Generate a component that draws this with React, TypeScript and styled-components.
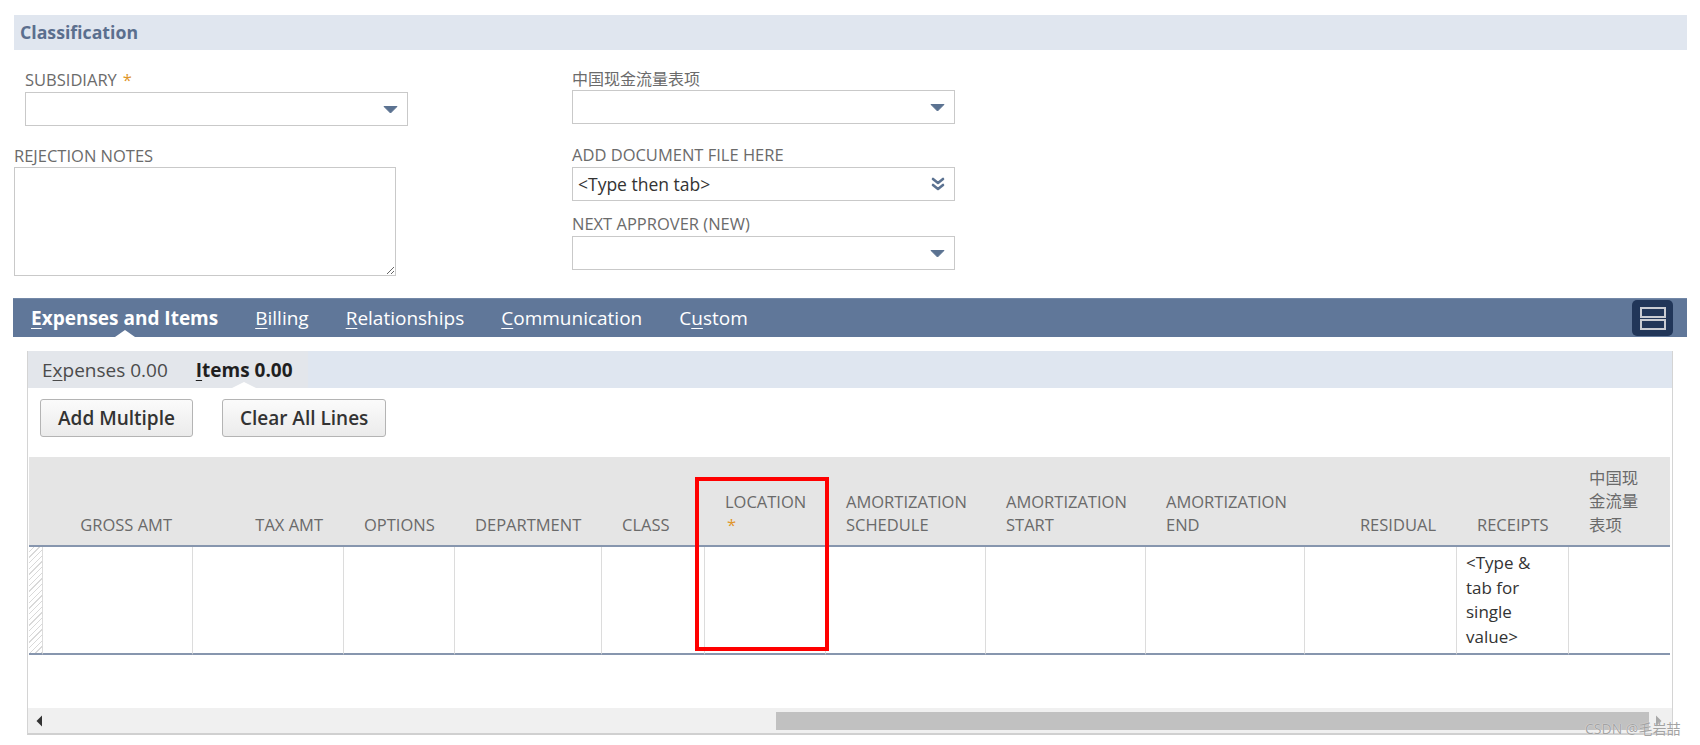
import React from 'react';
import styled, { createGlobalStyle, css } from 'styled-components';

const GlobalStyle = createGlobalStyle`
  html, body {
    margin: 0;
    padding: 0;
    background: #ffffff;
  }
  body {
    font-family: 'Open Sans', 'Noto Sans CJK SC', sans-serif;
    color: #333333;
  }
  * {
    box-sizing: border-box;
  }
`;

const Page = styled.div`
  position: relative;
  width: 1700px;
  height: 745px;
  padding: 15px 13px 0 13px;
  overflow: hidden;
`;

const SectionBar = styled.div`
  height: 35px;
  margin-left: 1px;
  padding-left: 6px;
  background: #e0e6ef;
  color: #5b6f8e;
  font-size: 17.7px;
  font-weight: 700;
  line-height: 35px;
`;

const FormGrid = styled.div`
  display: grid;
  grid-template-columns: 396px 383px;
  column-gap: 163px;
  align-items: start;
`;

const Column = styled.div<{ $top: number }>`
  padding-top: ${p => p.$top}px;
`;

const Field = styled.div<{ $indent?: number; $gap?: number }>`
  margin-left: ${p => p.$indent ?? 0}px;
  margin-top: ${p => p.$gap ?? 0}px;
`;

const FieldLabel = styled.div<{ $gap?: number }>`
  margin-bottom: ${p => p.$gap ?? 1}px;
  font-size: 16.5px;
  line-height: 20px;
  color: #6b6b6b;
  text-transform: uppercase;
  white-space: nowrap;
`;

const Cjk = styled.span<{ $size?: number }>`
  font-family: 'Noto Sans CJK SC', sans-serif;
  font-size: ${p => p.$size ?? 16}px;
`;

const Required = styled.span<{ $block?: boolean }>`
  color: #e0962b;
  margin-left: 6px;
  ${p =>
    p.$block &&
    css`
      display: block;
      margin-left: 2px;
    `}
`;

const SelectBox = styled.div<{ $width: number; $height?: number }>`
  width: ${p => p.$width}px;
  height: ${p => p.$height ?? 34}px;
  border: 1px solid #c9c9c9;
  background: #ffffff;
  display: flex;
  align-items: center;
  justify-content: space-between;
  padding: 0 9px 0 5px;
  font-size: 17.5px;
  color: #333333;
`;

const NotesArea = styled.textarea`
  display: block;
  width: 382px;
  height: 109px;
  margin: 0;
  border: 1px solid #c9c9c9;
  resize: both;
  font-family: inherit;
  font-size: 17px;
  outline: none;
`;

const TabBar = styled.div`
  margin-top: 22px;
  height: 39px;
  background: #607799;
  border-top: 1px solid #7388a7;
  display: flex;
  align-items: stretch;
  gap: 37px;
  padding: 0 14px 0 18px;
`;

const notch = (half: number, tall: number) => css`
  &::after {
    content: '';
    position: absolute;
    left: 50%;
    bottom: 0;
    margin-left: -${half}px;
    border-left: ${half}px solid transparent;
    border-right: ${half}px solid transparent;
    border-bottom: ${tall}px solid #ffffff;
  }
`;

const Tab = styled.div<{ $active?: boolean }>`
  position: relative;
  display: flex;
  align-items: center;
  font-size: 19px;
  color: #ffffff;
  font-weight: ${p => (p.$active ? 700 : 400)};
  white-space: nowrap;
  ${p => p.$active && notch(10, 7)}
`;

const Key = styled.u`
  text-decoration-thickness: 1px;
  text-underline-offset: 3px;
`;

const MenuButton = styled.div`
  margin-left: auto;
  align-self: center;
  width: 41px;
  height: 36px;
  border-radius: 5px;
  background: #213659;
  display: flex;
  align-items: center;
  justify-content: center;
`;

const Panel = styled.div`
  margin: 14px 14px 0 14px;
  border: 1px solid #d4d4d4;
  border-top: 0;
  border-bottom: 2px solid #d0d0d0;
`;

const SubtabBand = styled.div`
  height: 37px;
  background: #dfe6f0;
  display: flex;
`;

const SubtabGroup = styled.div`
  display: flex;
  align-items: stretch;
  gap: 28px;
  padding: 0 15px 0 14px;
  background: #e3e6eb;
`;

const Subtab = styled.div<{ $active?: boolean }>`
  position: relative;
  display: flex;
  align-items: center;
  font-size: 19px;
  color: ${p => (p.$active ? '#1f1f1f' : '#4b4b4b')};
  font-weight: ${p => (p.$active ? 700 : 400)};
  white-space: nowrap;
  ${p => p.$active && notch(12, 6)}
`;

const ButtonRow = styled.div`
  display: flex;
  gap: 29px;
  padding: 11px 0 0 12px;
`;

const ActionButton = styled.button`
  height: 38px;
  padding: 0 17px;
  border: 1px solid #b4b4b4;
  border-radius: 3px;
  background: linear-gradient(#fbfbfb, #ebebeb);
  font-family: inherit;
  font-size: 19px;
  font-weight: 600;
  color: #333333;
`;

const GridWrap = styled.div`
  margin: 20px 0 0 1px;
  width: 1641px;
  overflow: hidden;
`;

const LineTable = styled.table`
  width: 1641px;
  table-layout: fixed;
  border-collapse: separate;
  border-spacing: 0;
`;

const HeadCell = styled.th<{ $align?: 'left' | 'right'; $padRight?: number }>`
  height: 90px;
  padding: 0 ${p => p.$padRight ?? 20}px 9px 21px;
  background: #e5e5e5;
  border-bottom: 2px solid #8796ae;
  vertical-align: bottom;
  text-align: ${p => p.$align ?? 'left'};
  font-size: 16.5px;
  font-weight: 400;
  line-height: 22.5px;
  color: #6a6a6a;
`;

const BodyCell = styled.td`
  padding: 4px 20px 4px 9px;
  border-left: 1px solid #dcdcdc;
  border-bottom: 2px solid #8796ae;
  vertical-align: top;
  font-size: 17px;
  line-height: 24.6px;
  color: #333333;
`;

const HatchCell = styled.td`
  border-bottom: 2px solid #8796ae;
  background: repeating-linear-gradient(135deg, #ffffff 0 3px, #d9d9d9 3px 4px);
`;

const EmptyArea = styled.div`
  height: 53px;
`;

const ScrollBar = styled.div`
  height: 25px;
  background: #f0f0f0;
  display: flex;
  align-items: center;
  padding: 0 10px 0 8px;
`;

const ScrollThumb = styled.div`
  margin-left: auto;
  margin-right: 6px;
  width: 873px;
  height: 18px;
  background: #c1c1c1;
`;

const Annotation = styled.div`
  position: absolute;
  left: 695px;
  top: 477px;
  width: 134px;
  height: 174px;
  border: 4px solid #ff0000;
  pointer-events: none;
`;

const Watermark = styled.div`
  position: absolute;
  left: 1585px;
  top: 718px;
  font-size: 14px;
  color: #a3a3a3;
  text-shadow: 0 0 1px #ffffff;
  white-space: nowrap;
`;

const Caret = () => (
  <svg width="15" height="9" viewBox="0 0 15 9">
    <path d="M1 1.5 H14 L7.5 8 Z" fill="#5b7291" stroke="#5b7291" strokeWidth="1" strokeLinejoin="round" />
  </svg>
);

const DoubleChevron = () => (
  <svg width="14" height="14" viewBox="0 0 14 14">
    <path
      d="M2 2 L7 6 L12 2 M2 8 L7 12 L12 8"
      fill="none"
      stroke="#5b7291"
      strokeWidth="2.6"
      strokeLinecap="round"
      strokeLinejoin="round"
    />
  </svg>
);

const StackIcon = () => (
  <svg width="26" height="23" viewBox="0 0 26 23">
    <rect x="1" y="1" width="24" height="9" fill="none" stroke="#c9ccd3" strokeWidth="2" />
    <rect x="1" y="13" width="24" height="9" fill="none" stroke="#c9ccd3" strokeWidth="2" />
  </svg>
);

const ArrowLeft = () => (
  <svg width="7" height="12" viewBox="0 0 7 12">
    <path d="M6 0.5 V11.5 L0.5 6 Z" fill="#333333" />
  </svg>
);

const ArrowRight = () => (
  <svg width="7" height="12" viewBox="0 0 7 12">
    <path d="M1 0.5 V11.5 L6.5 6 Z" fill="#a8a8a8" />
  </svg>
);

type LineColumn = {
  width: number;
  label?: string;
  align?: 'left' | 'right';
  required?: boolean;
  cjk?: boolean;
  padRight?: number;
  text?: string;
};

const columns: LineColumn[] = [
  { width: 150, label: 'GROSS AMT', align: 'right' },
  { width: 151, label: 'TAX AMT', align: 'right' },
  { width: 111, label: 'OPTIONS' },
  { width: 147, label: 'DEPARTMENT', padRight: 10 },
  { width: 103, label: 'CLASS' },
  { width: 121, label: 'LOCATION', required: true, padRight: 10 },
  { width: 160, label: 'AMORTIZATION SCHEDULE', padRight: 10 },
  { width: 160, label: 'AMORTIZATION START', padRight: 10 },
  { width: 159, label: 'AMORTIZATION END', padRight: 10 },
  { width: 152, label: 'RESIDUAL', align: 'right' },
  { width: 112, label: 'RECEIPTS', text: '<Type & tab for single value>' },
  { width: 102, label: '中国现金流量表项', cjk: true, padRight: 25 },
];

const tabs = [
  { key: 'E', rest: 'xpenses and Items', active: true },
  { key: 'B', rest: 'illing' },
  { key: 'R', rest: 'elationships' },
  { key: 'C', rest: 'ommunication' },
];

export default function App() {
  return (
    <>
      <GlobalStyle />
      <Page>
        <SectionBar>Classification</SectionBar>

        <FormGrid>
          <Column $top={20}>
            <Field $indent={12}>
              <FieldLabel $gap={2}>
                Subsidiary<Required>*</Required>
              </FieldLabel>
              <SelectBox $width={383}>
                <span />
                <Caret />
              </SelectBox>
            </Field>
            <Field $indent={1} $gap={20}>
              <FieldLabel>Rejection Notes</FieldLabel>
              <NotesArea readOnly />
            </Field>
          </Column>

          <Column $top={18}>
            <Field>
              <FieldLabel>
                <Cjk>中国现金流量表项</Cjk>
              </FieldLabel>
              <SelectBox $width={383}>
                <span />
                <Caret />
              </SelectBox>
            </Field>
            <Field $gap={21}>
              <FieldLabel $gap={2}>Add Document File Here</FieldLabel>
              <SelectBox $width={383}>
                <span>&lt;Type then tab&gt;</span>
                <DoubleChevron />
              </SelectBox>
            </Field>
            <Field $gap={13}>
              <FieldLabel $gap={2}>Next Approver (New)</FieldLabel>
              <SelectBox $width={383}>
                <span />
                <Caret />
              </SelectBox>
            </Field>
          </Column>
        </FormGrid>

        <TabBar>
          {tabs.map(t => (
            <Tab key={t.key} $active={t.active}>
              <span>
                <Key>{t.key}</Key>
                {t.rest}
              </span>
            </Tab>
          ))}
          <Tab>
            <span>
              C<Key>u</Key>stom
            </span>
          </Tab>
          <MenuButton>
            <StackIcon />
          </MenuButton>
        </TabBar>

        <Panel>
          <SubtabBand>
            <SubtabGroup>
              <Subtab>
                <span>
                  E<Key>x</Key>penses 0.00
                </span>
              </Subtab>
              <Subtab $active>
                <span>
                  <Key>I</Key>tems 0.00
                </span>
              </Subtab>
            </SubtabGroup>
          </SubtabBand>

          <ButtonRow>
            <ActionButton>Add Multiple</ActionButton>
            <ActionButton>Clear All Lines</ActionButton>
          </ButtonRow>

          <GridWrap>
            <LineTable>
              <colgroup>
                <col style={{ width: 13 }} />
                {columns.map(c => (
                  <col key={c.label} style={{ width: c.width }} />
                ))}
              </colgroup>
              <thead>
                <tr>
                  <HeadCell />
                  {columns.map(c => (
                    <HeadCell key={c.label} $align={c.align} $padRight={c.padRight}>
                      {c.cjk ? <Cjk $size={16.4}>{c.label}</Cjk> : c.label}
                      {c.required && <Required $block>*</Required>}
                    </HeadCell>
                  ))}
                </tr>
              </thead>
              <tbody>
                <tr>
                  <HatchCell />
                  {columns.map(c => (
                    <BodyCell key={c.label}>{c.text}</BodyCell>
                  ))}
                </tr>
              </tbody>
            </LineTable>
          </GridWrap>

          <EmptyArea />

          <ScrollBar>
            <ArrowLeft />
            <ScrollThumb />
            <ArrowRight />
          </ScrollBar>
        </Panel>

        <Annotation />
        <Watermark>
          CSDN @<Cjk $size={14}>毛岩喆</Cjk>
        </Watermark>
      </Page>
    </>
  );
}
